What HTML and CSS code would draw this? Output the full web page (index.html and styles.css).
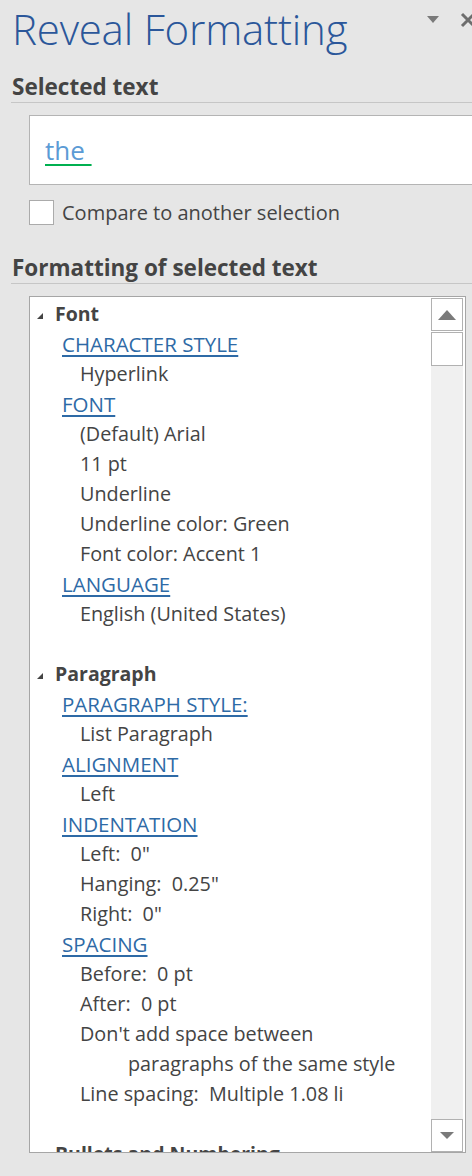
FILE: index.html
```html
<!DOCTYPE html>
<html lang="en">
<head>
<meta charset="utf-8">
<title>Reveal Formatting</title>
<link rel="stylesheet" href="styles.css">
</head>
<body>
<div class="pane">
  <header class="titlebar">
    <h1 class="title">Reveal Formatting</h1>
    <div class="controls">
      <svg class="ctl-drop" width="12" height="8" viewBox="0 0 12 8"><polygon points="0,0 12,0 6,7" fill="#7a7a7a"/></svg>
      <svg class="ctl-close" width="16" height="16" viewBox="0 0 16 16"><path d="M2 2 L14 14 M14 2 L2 14" stroke="#6d6d6d" stroke-width="3"/></svg>
    </div>
  </header>

  <h2 class="section-head">Selected text</h2>
  <div class="textbox"><span class="sample">the </span></div>
  <label class="compare"><span class="checkbox"></span><span class="compare-label">Compare to another selection</span></label>

  <h2 class="section-head section-head--second">Formatting of selected text</h2>

  <div class="tree-box">
    <div class="tree">
      <div class="row row--group"><span class="caret"></span>Font</div>
      <div class="row row--link"><a>CHARACTER STYLE</a></div>
      <div class="row row--value">Hyperlink</div>
      <div class="row row--link"><a>FONT</a></div>
      <div class="row row--value">(Default) Arial</div>
      <div class="row row--value">11 pt</div>
      <div class="row row--value">Underline</div>
      <div class="row row--value">Underline color: Green</div>
      <div class="row row--value">Font color: Accent 1</div>
      <div class="row row--link"><a>LANGUAGE</a></div>
      <div class="row row--value">English (United States)</div>
      <div class="row row--blank"></div>
      <div class="row row--group"><span class="caret"></span>Paragraph</div>
      <div class="row row--link"><a>PARAGRAPH STYLE:</a></div>
      <div class="row row--value">List Paragraph</div>
      <div class="row row--link"><a>ALIGNMENT</a></div>
      <div class="row row--value">Left</div>
      <div class="row row--link"><a>INDENTATION</a></div>
      <div class="row row--value">Left:  0"</div>
      <div class="row row--value">Hanging:  0.25"</div>
      <div class="row row--value">Right:  0"</div>
      <div class="row row--link"><a>SPACING</a></div>
      <div class="row row--value">Before:  0 pt</div>
      <div class="row row--value">After:  0 pt</div>
      <div class="row row--value">Don't add space between</div>
      <div class="row row--cont">paragraphs of the same style</div>
      <div class="row row--value">Line spacing:  Multiple 1.08 li</div>
      <div class="row row--blank"></div>
      <div class="row row--group row--nocaret">Bullets and Numbering</div>
    </div>
    <div class="scrollbar">
      <div class="sb-btn"><svg width="18" height="10" viewBox="0 0 18 10"><polygon points="0,10 18,10 9,0" fill="#7a7a7a"/></svg></div>
      <div class="sb-thumb"></div>
      <div class="sb-track"></div>
      <div class="sb-btn"><svg width="14" height="7" viewBox="0 0 14 7"><polygon points="0,0 14,0 7,7" fill="#7a7a7a"/></svg></div>
    </div>
  </div>
</div>
</body>
</html>
```

FILE: styles.css
```css
html, body {
  margin: 0;
  padding: 0;
  background: #e6e6e6;
}

body {
  font-family: "Open Sans", "Noto Sans", sans-serif;
  color: #444444;
}

.pane {
  width: 472px;
  height: 1176px;
  overflow: hidden;
  box-sizing: border-box;
  padding-left: 11px;
}

.titlebar {
  display: flex;
  align-items: flex-start;
  justify-content: space-between;
  height: 72px;
}

.title {
  margin: 0;
  padding-left: 1px;
  font-weight: 300;
  font-size: 42px;
  line-height: 58px;
  color: #2b579a;
  letter-spacing: -0.2px;
  white-space: nowrap;
}

.controls {
  display: flex;
  align-items: center;
  gap: 21px;
  padding-top: 12px;
  margin-right: -4px;
}

.section-head {
  margin: 0;
  font-size: 22.5px;
  font-weight: 700;
  line-height: 30px;
  color: #444444;
  border-bottom: 1px solid #c6c6c6;
  padding-left: 1px;
}

.section-head--second {
  margin-top: 29px;
}

.textbox {
  margin: 12px 0 0 18px;
  height: 70px;
  box-sizing: border-box;
  border: 1px solid #b4b4b4;
  border-right: none;
  background: #ffffff;
  padding: 16px 0 0 15px;
}

.sample {
  font-size: 26px;
  line-height: 36px;
  color: #5b9bd5;
  text-decoration: underline;
  text-decoration-color: #00b050;
  text-decoration-thickness: 2px;
  text-underline-offset: 4px;
  white-space: pre;
}

.compare {
  display: flex;
  align-items: center;
  margin: 15px 0 0 18px;
  height: 24px;
}

.checkbox {
  width: 25px;
  height: 25px;
  box-sizing: border-box;
  border: 1px solid #ababab;
  background: #ffffff;
  margin-right: 8px;
}

.compare-label {
  font-size: 20px;
  color: #444444;
}

.tree-box {
  display: flex;
  margin: 12px 6px 0 18px;
  height: 857px;
  box-sizing: border-box;
  border: 1px solid #a6a6a6;
  background: #ffffff;
  overflow: hidden;
}

.tree {
  flex: 1;
  padding-top: 2px;
  overflow: hidden;
}

.row {
  height: 30px;
  line-height: 30px;
  font-size: 19.8px;
  white-space: pre;
  color: #444444;
}

.row--group {
  font-weight: 700;
  font-size: 19.5px;
  padding-left: 25px;
  position: relative;
}

.caret {
  position: absolute;
  left: 7px;
  top: 14px;
  width: 0;
  height: 0;
  border-left: 6px solid transparent;
  border-bottom: 6px solid #444444;
}

.row--link {
  padding-left: 32px;
  font-size: 20.5px;
}

.row--link a {
  color: #2e6aa6;
  text-decoration: underline;
  text-underline-offset: 3px;
}

.row--value {
  padding-left: 50px;
}

.row--cont {
  padding-left: 98px;
}

.scrollbar {
  width: 32px;
  display: flex;
  flex-direction: column;
  gap: 1px;
  padding: 1px 2px 0 0;
}

.sb-btn {
  height: 33px;
  box-sizing: border-box;
  border: 1px solid #b1b1b1;
  background: #ffffff;
  display: flex;
  align-items: center;
  justify-content: center;
}

.sb-thumb {
  height: 34px;
  box-sizing: border-box;
  border: 1px solid #b1b1b1;
  background: #ffffff;
}

.sb-track {
  flex: 1;
  background: #f0f0f0;
  margin: -1px 0;
}
```
